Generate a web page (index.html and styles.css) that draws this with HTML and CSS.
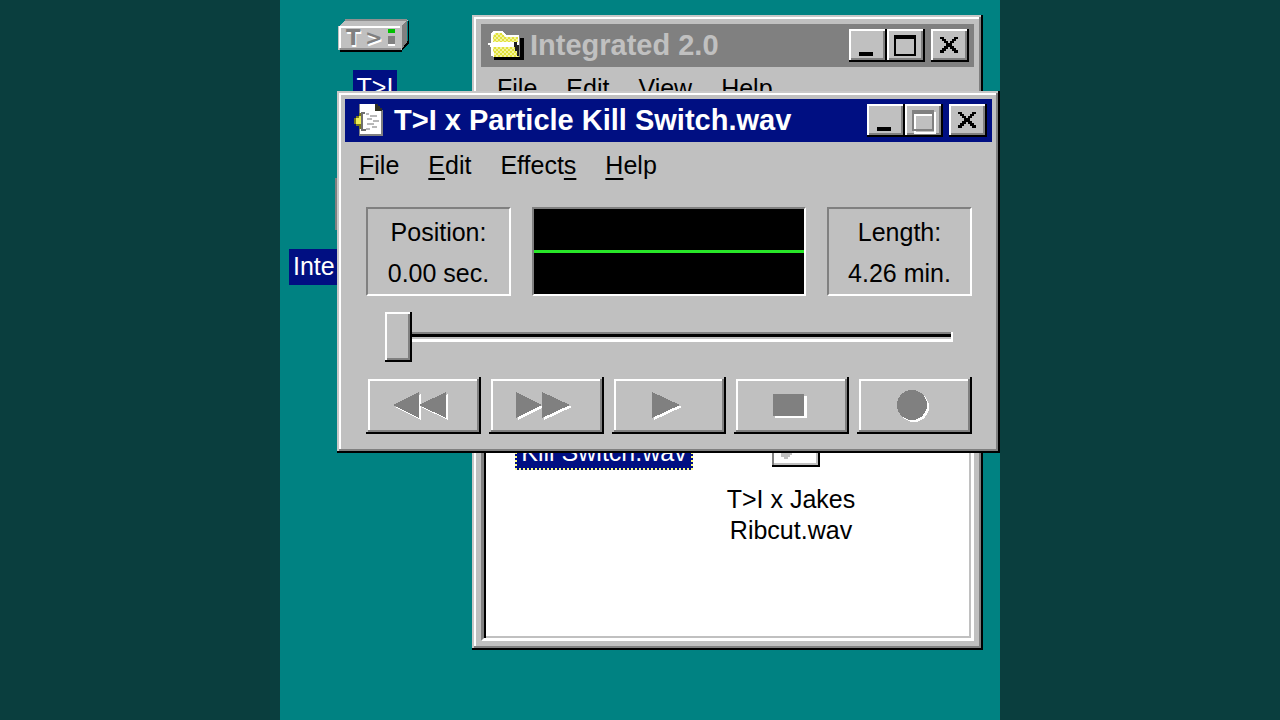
FILE: index.html
```html
<!DOCTYPE html>
<html lang="en">
<head>
<meta charset="UTF-8" />
<meta name="viewport" content="width=device-width, initial-scale=1" />
<title>T&gt;I x Particle Kill Switch.wav</title>
<link rel="stylesheet" href="styles.css">
</head>
<body>

<main class="desktop">
  <div class="shortcuts">
    <a class="shortcut" href="#drive">
      <svg width="74" height="36" viewBox="0 0 74 36" shape-rendering="crispEdges" aria-hidden="true">
        <path d="M2 30H64L70 22V3H71V25L64 32V34H2Z" fill="#000" />
        <path d="M1 8L7 2H70L64 8Z" fill="#c0c0c0" />
        <path d="M7 1H69V3H7Z" fill="#909090" />
        <path d="M64 8L69 2V24L64 31Z" fill="#808080" />
        <path d="M0 8H64V32H0Z" fill="#c0c0c0" />
        <path d="M1 8H62V10H3V30H1Z" fill="#fff" />
        <path d="M2 30H63V32H2Z" fill="#909090" />
        <g class="drive-text">
          <text class="drive-shine" x="9" y="29">T</text>
          <text class="drive-shine" x="28" y="29">&gt;</text>
          <text x="8" y="27">T</text>
          <text x="27" y="27">&gt;</text>
        </g>
        <path d="M50 18H57V26H50Z" fill="#808080" />
        <path d="M50 26H57V28H50Z" fill="#fff" />
        <path d="M50 11H57V15H50Z" fill="#00c000" />
      </svg>
      <span class="shortcut-label">T&gt;I</span>
    </a>
    <a class="shortcut" href="#integrated">
      <svg width="80" height="55" viewBox="0 0 80 55" shape-rendering="crispEdges" aria-hidden="true">
        <path d="M0 0H80V52H0Z" fill="#808080" />
        <path d="M3 2H78V50H3Z" fill="#c0c0c0" />
      </svg>
      <span class="shortcut-label covered">Inte</span>
    </a>
  </div>

  <!-- Folder window -->
  <section class="window folder" aria-label="Integrated 2.0">
    <header class="titlebar inactive">
      <svg width="38" height="33" viewBox="0 0 38 33" shape-rendering="crispEdges" aria-hidden="true">
        <defs>
          <pattern id="dither" width="4" height="4" patternUnits="userSpaceOnUse">
            <path d="M0 0H4V4H0Z" fill="#f4f49c" />
            <path d="M0 0H2V2H0ZM2 2H4V4H2Z" fill="#e2e23c" />
          </pattern>
        </defs>
        <path d="M32 9H36V31H6V28H32Z" fill="#000" />
        <path d="M3 5L5 2H15L18 6H31V28H5L3 26Z" fill="#fff" />
        <path d="M5 6L7 4H14L17 8H30V13H5Z" fill="url(#dither)" />
        <path d="M5 17H27L31 28H6Z" fill="url(#dither)" />
        <path d="M0 14H25V16H27V18H2V16H0ZM3 18H5V27H3Z" fill="#fff" />
        <path d="M26 13H29V16H31V27H29V22H27V18H26Z" fill="#202020" />
      </svg>
      <h2>Integrated 2.0</h2>
      <div class="title-buttons">
        <button type="button" aria-label="Minimize">
          <svg width="28" height="27" viewBox="0 0 28 27" shape-rendering="crispEdges"><path d="M6 20H20V24H6Z" /></svg>
        </button>
        <button type="button" aria-label="Maximize">
          <svg width="28" height="27" viewBox="0 0 28 27" shape-rendering="crispEdges"><path fill-rule="evenodd" d="M3 3H25V24H3ZM5 7V22H23V7Z" /></svg>
        </button>
        <button type="button" class="close" aria-label="Close">
          <svg width="28" height="27" viewBox="0 0 28 27" shape-rendering="crispEdges"><path d="M5 5H9V7H11V9H13V11H15V9H17V7H19V5H23V7H21V9H19V11H17V14H19V16H21V18H23V21H19V19H17V17H15V15H13V17H11V19H9V21H5V18H7V16H9V14H11V11H9V9H7V7H5Z" /></svg>
        </button>
      </div>
    </header>
    <nav class="menubar">
      <button type="button"><u>F</u>ile</button>
      <button type="button"><u>E</u>dit</button>
      <button type="button"><u>V</u>iew</button>
      <button type="button"><u>H</u>elp</button>
    </nav>
    <div class="pane">
      <a class="file file-kill selected" href="#kill-switch">
        <span class="file-label">Kill Switch.wav</span>
      </a>
      <a class="file file-ribcut" href="#ribcut">
        <svg width="58" height="62" viewBox="-10 0 58 62" shape-rendering="crispEdges" aria-hidden="true">
          <path d="M0 0H48V62H0Z" fill="#000" />
          <path d="M0 0H46V60H0Z" fill="#808080" />
          <path d="M2 2H46V60H2Z" fill="#c0c0c0" />
          <path d="M2 2H44V58H2Z" fill="#fff" />
          <path d="M9 40H20V50H18V52H16V54H12V52H9Z" fill="#c0c0c0" />
        </svg>
        <span class="file-label">T&gt;I x Jakes Ribcut.wav</span>
      </a>
    </div>
  </section>

  <!-- Sound recorder -->
  <section class="window recorder" aria-label="Sound recorder">
    <header class="titlebar">
      <svg width="38" height="33" viewBox="0 0 38 33" shape-rendering="crispEdges" aria-hidden="true">
        <path d="M7 0H24L31 7V32H7Z" fill="#808080" />
        <path d="M8 0H23V7H29V30H8Z" fill="#fff" />
        <path d="M23 0H26V2H28V4H30V7H23Z" fill="#303020" />
        <path d="M14 9H17V11H14ZM18 11H25V13H18ZM15 14H20V16H15ZM21 16H27V18H21ZM15 19H22V21H15ZM20 22H25V24H20ZM14 24H18V26H14Z" fill="#b8b8b8" />
        <path d="M9 8H13V10H11V25H14V27H9V22H7V12H9Z" fill="#707070" />
        <path d="M2 14H4V12H7V9H9V25H7V22H4V20H2Z" fill="#77771c" />
        <path d="M4 14H7V12H9V20H4Z" fill="#eeee55" />
      </svg>
      <h1>T&gt;I x Particle Kill Switch.wav</h1>
      <div class="title-buttons">
        <button type="button" aria-label="Minimize">
          <svg width="28" height="27" viewBox="0 0 28 27" shape-rendering="crispEdges"><path d="M6 20H20V24H6Z" /></svg>
        </button>
        <button type="button" aria-label="Maximize" disabled>
          <svg width="28" height="27" viewBox="0 0 28 27" shape-rendering="crispEdges">
            <path fill="#fff" fill-rule="evenodd" d="M5 5H27V27H5ZM7 9V25H25V9Z" />
            <path fill="#808080" fill-rule="evenodd" d="M3 3H25V24H3ZM5 7V22H23V7Z" />
          </svg>
        </button>
        <button type="button" class="close" aria-label="Close">
          <svg width="28" height="27" viewBox="0 0 28 27" shape-rendering="crispEdges"><path d="M5 5H9V7H11V9H13V11H15V9H17V7H19V5H23V7H21V9H19V11H17V14H19V16H21V18H23V21H19V19H17V17H15V15H13V17H11V19H9V21H5V18H7V16H9V14H11V11H9V9H7V7H5Z" /></svg>
        </button>
      </div>
    </header>
    <nav class="menubar">
      <button type="button"><u>F</u>ile</button>
      <button type="button"><u>E</u>dit</button>
      <button type="button">Effect<u>s</u></button>
      <button type="button"><u>H</u>elp</button>
    </nav>
    <div class="recorder-body">
      <div class="readouts">
        <div class="readout"><span>Position:</span><span>0.00 sec.</span></div>
        <div class="scope"><div class="scope-line"></div></div>
        <div class="readout"><span>Length:</span><span>4.26 min.</span></div>
      </div>
      <input class="seek" type="range" min="0" max="256" value="0" aria-label="Position" />
      <div class="transport">
        <button type="button" aria-label="Rewind">
          <svg width="56" height="30" viewBox="0 0 56 30" shape-rendering="crispEdges">
            <path class="shine" d="M2 16L28 3V29ZM28 16L55 3V29Z" />
            <path d="M0 14L26 1V27ZM26 14L53 1V27Z" />
          </svg>
        </button>
        <button type="button" aria-label="Fast forward">
          <svg width="56" height="30" viewBox="0 0 56 30" shape-rendering="crispEdges">
            <path class="shine" d="M2 3L28 16L2 29ZM28 3L56 16L28 29Z" />
            <path d="M0 1L26 14L0 27ZM26 1L54 14L26 27Z" />
          </svg>
        </button>
        <button type="button" aria-label="Play">
          <svg width="30" height="30" viewBox="0 0 30 30" shape-rendering="crispEdges">
            <path class="shine" d="M2 3L30 16L2 29Z" />
            <path d="M0 1L28 14L0 27Z" />
          </svg>
        </button>
        <button type="button" aria-label="Stop">
          <svg width="34" height="30" viewBox="0 0 34 30" shape-rendering="crispEdges">
            <path class="shine" d="M2 5H34V27H2Z" />
            <path d="M0 3H31V25H0Z" />
          </svg>
        </button>
        <button type="button" aria-label="Record">
          <svg width="32" height="32" viewBox="0 0 32 32" shape-rendering="crispEdges">
            <circle class="shine" cx="17" cy="17" r="15" />
            <circle cx="15" cy="15" r="15" />
          </svg>
        </button>
      </div>
    </div>
  </section>
</main>

</body>
</html>
```
FILE: styles.css
```css
* {
  box-sizing: border-box;
}

body {
  margin: 0;
  background: #0a3e3e;
  color: #000;
  font-family: "Liberation Sans", Arial, sans-serif;
  font-size: 25px;
  line-height: 31px;
}

button {
  padding: 0;
  border: none;
  background: #c0c0c0;
  color: inherit;
  font: inherit;
}

svg {
  display: block;
  flex: none;
}

a {
  color: inherit;
  text-decoration: none;
}

.desktop {
  position: relative;
  width: 720px;
  max-width: 100%;
  height: 100vh;
  min-height: 660px;
  margin: 0 auto;
  overflow: hidden;
  background: #008282;
}

/* Desktop shortcuts */
.shortcuts {
  display: flex;
  flex-direction: column;
  gap: 72px;
  width: 172px;
  margin-left: 9px;
  padding-top: 18px;
}

.shortcut {
  display: flex;
  flex-direction: column;
  align-items: center;
  gap: 16px;
}

.shortcut-label {
  padding: 0 4px 2px;
  background: #000f82;
  color: #fff;
  line-height: 34px;
  white-space: nowrap;
}

.shortcut-label.covered {
  align-self: flex-start;
}

.drive-text {
  fill: #808080;
  font-family: "DejaVu Sans", sans-serif;
  font-size: 21px;
  font-weight: 700;
}

.drive-shine {
  fill: #fff;
}

/* Windows */
.window {
  position: absolute;
  display: flex;
  flex-direction: column;
  padding: 8px;
  background: #c0c0c0;
  box-shadow:
    inset -2px -2px #000,
    inset 2px 2px #c8c8c8,
    inset -4px -4px #808080,
    inset 4px 4px #fff;
}

.folder {
  top: 15px;
  left: 192px;
  right: 17px;
  padding: 9px;
}

.recorder {
  top: 91px;
  left: 57px;
  right: 0;
}

.titlebar {
  display: flex;
  align-items: center;
  gap: 4px;
  padding: 5px 5px 5px 7px;
  background: #000f82;
  color: #fff;
}

.titlebar.inactive {
  background: #808080;
  color: #c0c0c0;
}

.titlebar h1,
.titlebar h2 {
  flex: 1;
  margin: 0;
  font-size: 29px;
  font-weight: 700;
  line-height: 33px;
  white-space: nowrap;
}

.title-buttons {
  display: flex;
}

.title-buttons button {
  width: 38px;
  height: 33px;
  padding: 2px 4px;
  box-shadow:
    inset -2px -2px #000,
    inset 2px 2px #fff,
    inset -4px -4px #808080;
}

.title-buttons .close {
  margin-left: 6px;
}

.menubar {
  display: flex;
  gap: 29px;
  padding: 8px 14px 0;
}

.folder .menubar {
  padding: 6px 16px 0;
}

.menubar u {
  text-decoration-thickness: 2px;
  text-underline-offset: 4px;
  text-decoration-skip-ink: none;
}

/* Folder contents */
.pane {
  position: relative;
  height: 528px;
  margin-top: 9px;
  border: 3px solid;
  border-color: #808080 #fff #fff #808080;
  background: #fff;
  box-shadow: inset 2px 2px #000, inset -2px -2px #c0c0c0;
}

.file {
  position: absolute;
  display: flex;
  flex-direction: column;
  align-items: center;
  gap: 17px;
  width: 178px;
  text-align: center;
}

.file-kill {
  top: 319px;
  left: 31px;
}

.file-ribcut {
  top: 289px;
  left: 218px;
}

.file-label {
  width: 100%;
  padding: 0 20px;
}

.selected .file-label {
  padding: 0;
  border: 2px dotted #ffff82;
  background: #000f82;
  color: #fff;
}

/* Recorder */
.recorder-body {
  display: flex;
  flex-direction: column;
  padding: 26px 20px 11px 21px;
}

.readouts {
  display: grid;
  grid-template-columns: 145px 1fr 145px;
  gap: 21px;
}

.readout,
.scope {
  height: 89px;
  border: 2px solid;
  border-color: #808080 #fff #fff #808080;
}

.readout {
  display: flex;
  flex-direction: column;
  padding-top: 3px;
  line-height: 41px;
  text-align: center;
}

.scope {
  display: flex;
  align-items: center;
  background: #000;
}

.scope-line {
  width: 100%;
  height: 3px;
  background: #28e628;
}

.seek {
  appearance: none;
  height: 50px;
  margin: 16px 19px 15px;
  background: none;
}

.seek::-webkit-slider-runnable-track {
  height: 10px;
  border-right: 2px solid #fff;
  background: linear-gradient(#808080 2px, #000 2px 5px, #c0c0c0 5px 7px, #fff 7px);
}

.seek::-webkit-slider-thumb {
  appearance: none;
  width: 27px;
  height: 50px;
  margin-top: -20px;
  background: #c0c0c0;
  box-shadow:
    inset -2px -2px #000,
    inset 2px 2px #fff,
    inset -4px -4px #808080;
}

.transport {
  display: grid;
  grid-template-columns: repeat(5, 1fr);
  gap: 8px;
}

.transport button {
  display: flex;
  align-items: center;
  justify-content: center;
  height: 57px;
  padding-right: 4px;
  box-shadow:
    inset -2px -2px #000,
    inset 2px 2px #c0c0c0,
    inset -4px -4px #808080,
    inset 4px 4px #fff;
}

.transport svg {
  fill: #808080;
}

.transport .shine {
  fill: #fff;
}
```
